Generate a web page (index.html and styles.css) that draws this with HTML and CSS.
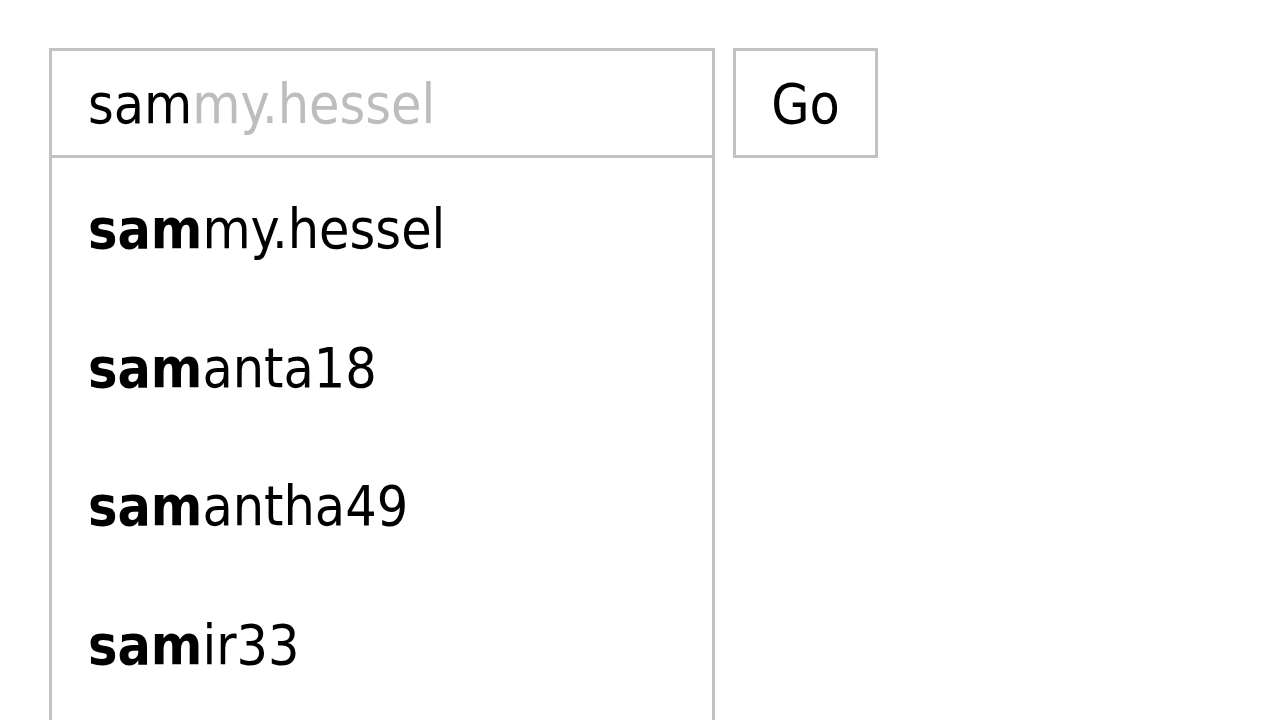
FILE: index.html
```html
<!DOCTYPE html>
<html lang="en">
<head>
    <meta charset="UTF-8">
    <meta name="viewport" content="width=device-width, initial-scale=1.0">
    <title>Autocomplete</title>
    <link rel="stylesheet" href="styles.css">
</head>
<body>
    <div class="search">
        <div class="field">
            <div class="input"><span class="typed">sam</span><span class="hint">my.hessel</span></div>
            <ul class="suggestions">
                <li class="item"><b>sam</b>my.hessel</li>
                <li class="item"><b>sam</b>anta18</li>
                <li class="item"><b>sam</b>antha49</li>
                <li class="item"><b>sam</b>ir33</li>
            </ul>
        </div>
        <div class="go">Go</div>
    </div>
</body>
</html>
```
FILE: styles.css
```css
body{
    margin: 0;
    background: #fff;
    font-family: "DejaVu Sans Condensed", "DejaVu Sans", sans-serif;
    color: #000;
    overflow: hidden;
    height: 720px;
}
.search{
    display: flex;
    align-items: flex-start;
    gap: 18px;
    padding: 48px 0 0 49px;
}
.field{
    width: 666px;
}
.input{
    box-sizing: border-box;
    height: 110px;
    border: 3px solid #c2c2c2;
    padding-left: 36px;
    font-size: 55px;
    line-height: 106px;
}
.hint{
    color: #bdbdbd;
}
.suggestions{
    list-style: none;
    margin: 0;
    padding: 0 0 40px;
    border: 3px solid #c2c2c2;
    border-top: none;
}
.item{
    height: 138.5px;
    padding-left: 36px;
    font-size: 55px;
    line-height: 142px;
}
.item b{
    font-weight: bold;
}
.go{
    box-sizing: border-box;
    width: 145px;
    height: 110px;
    border: 3px solid #c2c2c2;
    font-size: 55px;
    line-height: 106px;
    text-align: center;
}
```
